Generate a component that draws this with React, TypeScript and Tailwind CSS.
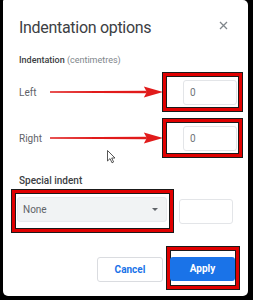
import React from "react";

const redBox =
  "border-[3px] border-[#e00000] shadow-[0_0_0_1px_#1a1a1a,inset_0_0_0_1px_#1a1a1a]";

function Arrow() {
  return (
    <svg className="flex-1 h-[12px] block" viewBox="0 0 112 12" preserveAspectRatio="none">
      <path d="M0 5.2 L96 4.8 L96 7.2 L0 6.8 Z" fill="#e11b1b" />
      <path d="M93 0.5 L112 6 L93 11.5 L96 6 Z" fill="#e11b1b" />
    </svg>
  );
}

function NumBox({ value }: { value: string }) {
  return (
    <div className={`${redBox} w-[79px] h-[38px] flex items-center justify-end pr-[2px] pt-[1px]`}>
      <div className="w-[54px] h-[25px] border border-[#e3e5e8] rounded-[3px] flex items-center pl-[6px] text-[10px] text-[#70757a]">
        {value}
      </div>
    </div>
  );
}

export default function App() {
  return (
    <div
      className="w-[253px] h-[300px] bg-black pl-[3px] pr-[5px] pb-[4px]"
      style={{ fontFamily: "Roboto, 'Liberation Sans', sans-serif" }}
    >
      <div className="relative w-full h-full bg-white rounded-[5px] rounded-tl-[1px] flex flex-col pl-[16px] pr-[6px]">
        {/* title */}
        <div className="mt-[18px] h-[20px] flex items-center justify-between">
          <span className="text-[16px] leading-[20px] tracking-[-0.3px] text-[#3c4043]">Indentation options</span>
          <svg width="9" height="9" viewBox="0 0 9 9" className="mr-[14px] mt-[-5px]">
            <path d="M1 1 L8 8 M8 1 L1 8" stroke="#80868b" strokeWidth="1.3" />
          </svg>
        </div>

        <div className="mt-[16px] text-[9px] leading-[12px]">
          <span className="font-medium text-[#3c4043]">Indentation</span>{" "}
          <span className="text-[#80868b]">(centimetres)</span>
        </div>

        <div className="mt-[7px] flex items-center h-[38px]">
          <span className="w-[31px] text-[10px] text-[#5f6368]">Left</span>
          <Arrow />
          <NumBox value="0" />
        </div>

        <div className="mt-[8px] flex items-center h-[38px]">
          <span className="w-[31px] text-[10px] text-[#5f6368]">Right</span>
          <Arrow />
          <NumBox value="0" />
        </div>

        <div className="mt-[17px] text-[10px] leading-[13px] font-medium text-[#3c4043]">Special indent</div>

        <div className="mt-[3px] flex items-center">
          <div className={`${redBox} ml-[-7px] w-[161px] h-[42px] pl-[2px] pr-[3px] pt-[4px]`}>
            <div className="h-[25px] bg-[#f1f3f4] border border-[#e8eaed] rounded-[3px] flex items-center justify-between pl-[5px] pr-[8px] text-[10px] text-[#5f6368]">
              <span>None</span>
              <svg width="6" height="3" viewBox="0 0 6 3">
                <path d="M0 0 L6 0 L3 3 Z" fill="#5f6368" />
              </svg>
            </div>
          </div>
          <div className="ml-[6px] w-[54px] h-[25px] border border-[#e3e5e8] rounded-[3px]" />
        </div>

        <div className="mt-[15px] flex items-start justify-end pr-[3px]">
          <button className="mt-[10px] w-[66px] h-[25px] border border-[#dadce0] rounded-[3px] text-[10px] font-bold text-[#1a73e8]">
            Cancel
          </button>
          <div className={`${redBox} ml-[4px] w-[72px] h-[42px] pt-[5px] pl-[0px] pr-[1px]`}>
            <button className="w-full h-[24px] bg-[#1a73e8] rounded-[3px] text-[10px] font-bold text-white">
              Apply
            </button>
          </div>
        </div>

        {/* mouse cursor */}
        <svg className="absolute left-[104px] top-[150px]" width="9" height="14" viewBox="0 0 9 14">
          <path d="M0.5 0.5 L0.5 11 L3 8.6 L5 12.8 L6.6 12 L4.7 8 L8 8 Z" fill="#fff" stroke="#444" strokeWidth="0.9" strokeLinejoin="round" />
        </svg>
      </div>
    </div>
  );
}
